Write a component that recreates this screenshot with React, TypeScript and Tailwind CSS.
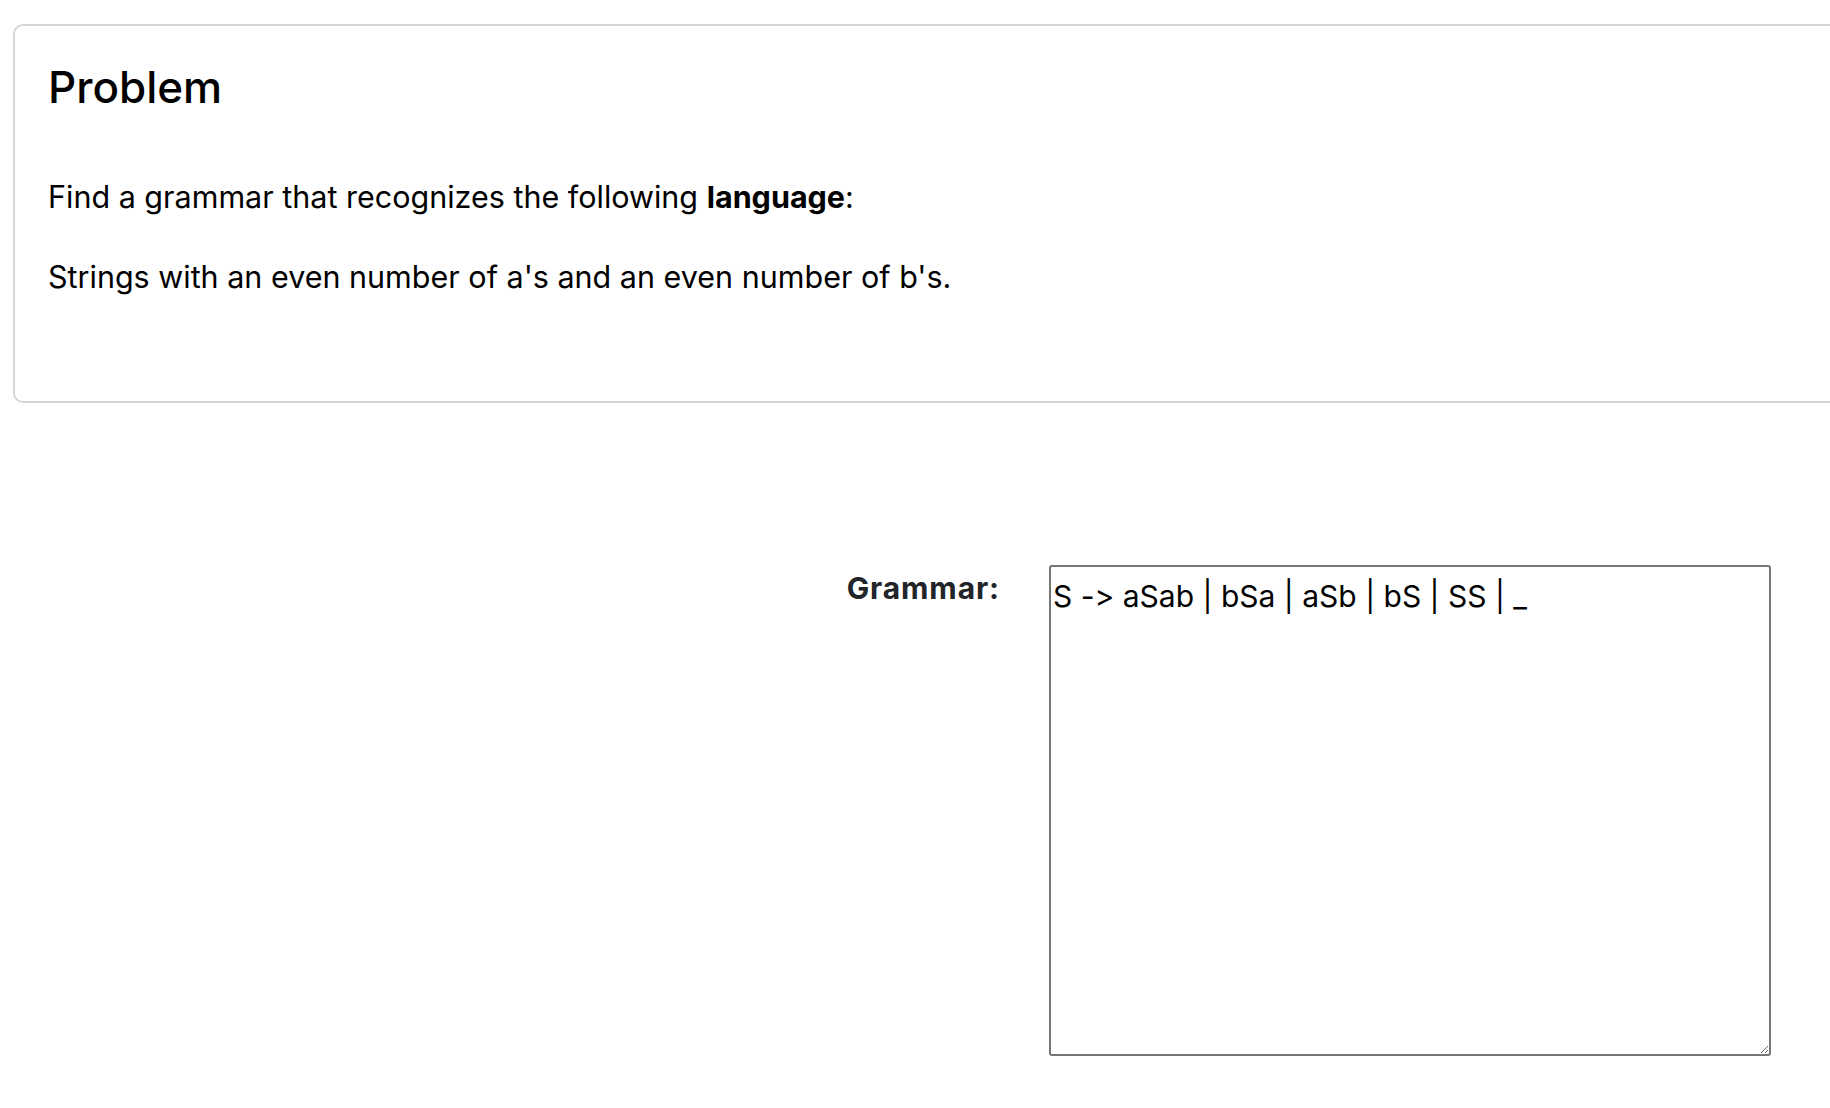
import React from 'react';

const GRAMMAR = 'S -> aSab | bSa | aSb | bS | SS | _';

export default function App() {
    return (
        <div className="w-[1830px] h-[1108px] overflow-hidden bg-white text-black font-['Inter',sans-serif] [font-feature-settings:'calt'_0,'liga'_0]">
            {/* Problem card */}
            <div className="ml-[13px] mt-[24px] w-[1900px] h-[379px] border-2 border-[#d6d6d6] rounded-[10px] pl-[33px] pt-[34px]">
                <h2 className="text-[44px] leading-[1.23] font-medium">Problem</h2>
                <p className="mt-[60px] text-[30.5px] leading-[1.48]">
                    Find a grammar that recognizes the following <b className="font-bold">language</b>:
                </p>
                <p className="mt-[35px] text-[30.5px] leading-[1.48]">
                    Strings with an even number of a's and an even number of b's.
                </p>
            </div>

            {/* Answer */}
            <div className="mt-[162px] flex items-start">
                <label className="w-[1000px] text-right pt-[1px] text-[30px] tracking-[0.9px] leading-[1.5] font-bold text-[#212529]">
                    Grammar:
                </label>
                <textarea
                    className="ml-[49px] w-[722px] h-[491px] border-2 border-[#767676] rounded-[3px] px-[2px] pt-[11px] text-[30px] leading-[1.2] text-black font-['Inter',sans-serif] [font-feature-settings:'calt'_0,'liga'_0] outline-none resize-y"
                    defaultValue={GRAMMAR}
                />
            </div>
        </div>
    );
}
